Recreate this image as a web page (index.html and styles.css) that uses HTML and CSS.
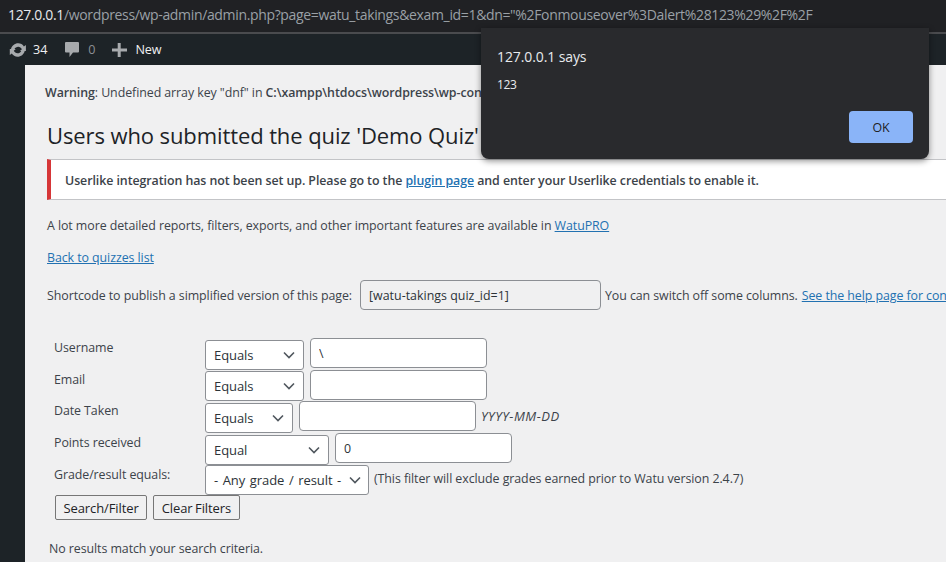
FILE: index.html
```html
<!DOCTYPE html>
<html lang="en">
<head>
<meta charset="utf-8">
<title>Users who submitted the quiz</title>
<link rel="stylesheet" href="styles.css">
</head>
<body>
<header class="urlbar"><span class="host">127.0.0.1</span><span class="path">/wordpress/wp-admin/admin.php?page=watu_takings&amp;exam_id=1&amp;dn="%2Fonmouseover%3Dalert%28123%29%2F%2F</span></header>
<nav class="adminbar">
  <span class="ab-item">
    <svg class="ab-icon" width="20" height="20" viewBox="0 0 20 20"><path d="M10.2 3.300c2.400 0 4.500 1.200 5.700 3.100l2-1.400v6h-6l2-1.700c-.8-1.500-2-2.500-3.700-2.500-1.600 0-3 .9-3.700 2.300H3c.8-3.400 3.700-5.800 7.200-5.800z M1.800 9h6l-2 1.700c.8 1.500 2 2.500 3.700 2.500 1.600 0 3-.9 3.700-2.300h3.500c-.8 3.400-3.700 5.800-7.200 5.800-2.400 0-4.500-1.200-5.700-3.100l-2 1.400z"/></svg>
    <span class="ab-count">34</span>
  </span>
  <span class="ab-item ab-comments">
    <svg class="ab-icon" width="16" height="17" viewBox="0 0 16 17"><path d="M2 1h12a1 1 0 0 1 1 1v8.500a1 1 0 0 1-1 1H9l-3.500 4.500v-4.500H2a1 1 0 0 1-1-1V2a1 1 0 0 1 1-1z"/></svg>
    <span class="ab-zero">0</span>
  </span>
  <span class="ab-item ab-new">
    <svg class="ab-icon" width="15" height="14" viewBox="0 0 15 14"><path d="M5.700 0h3v5.500H15v3H8.700V14h-3V8.500H0v-3h5.700z"/></svg>
    <span class="ab-count">New</span>
  </span>
</nav>
<div class="shell">
  <aside class="sidebar"></aside>
  <main class="content">
    <p class="warning"><b>Warning</b>: Undefined array key "dnf" in <b>C:\xampp\htdocs\wordpress\wp-content\plugins\watu\views\takings.html.php</b></p>
    <h1 class="title">Users who submitted the quiz 'Demo Quiz'</h1>
    <div class="notice"><b>Userlike integration has not been set up. Please go to the <a href="#">plugin page</a> and enter your Userlike credentials to enable it.</b></div>
    <p class="promo">A lot more detailed reports, filters, exports, and other important features are available in <a href="#">WatuPRO</a></p>
    <p class="back"><a href="#">Back to quizzes list</a></p>
    <div class="shortcode">Shortcode to publish a simplified version of this page: <input class="code" type="text" value="[watu-takings quiz_id=1]" readonly> You can switch off some columns. <a href="#">See the help page for configuration</a></div>
    <form class="filters">
      <div class="row"><label class="lbl">Username</label>
        <span class="sel w-99">Equals<svg class="chev" width="12" height="8" viewBox="0 0 12 8"><path d="M1 1.500l5 5 5-5"/></svg></span>
        <input class="txt" type="text" value="\"></div>
      <div class="row"><label class="lbl">Email</label>
        <span class="sel w-99">Equals<svg class="chev" width="12" height="8" viewBox="0 0 12 8"><path d="M1 1.500l5 5 5-5"/></svg></span>
        <input class="txt" type="text"></div>
      <div class="row"><label class="lbl">Date Taken</label>
        <span class="sel w-88">Equals<svg class="chev" width="12" height="8" viewBox="0 0 12 8"><path d="M1 1.500l5 5 5-5"/></svg></span>
        <input class="txt" type="text"> <i class="hint">YYYY-MM-DD</i></div>
      <div class="row"><label class="lbl">Points received</label>
        <span class="sel w-124">Equal<svg class="chev" width="12" height="8" viewBox="0 0 12 8"><path d="M1 1.500l5 5 5-5"/></svg></span>
        <input class="txt" type="text" value="0"></div>
      <div class="row row-grade"><label class="lbl">Grade/result equals:</label>
        <span class="sel w-164">- Any grade / result -<svg class="chev" width="12" height="8" viewBox="0 0 12 8"><path d="M1 1.500l5 5 5-5"/></svg></span>
        <span class="note">(This filter will exclude grades earned prior to Watu version 2.4.7)</span></div>
      <div class="actions"><button class="btn" type="button">Search/Filter</button><button class="btn" type="button">Clear Filters</button></div>
    </form>
    <p class="empty">No results match your search criteria.</p>
  </main>
</div>
<div class="dialog" role="alertdialog">
  <div class="d-title">127.0.0.1 says</div>
  <div class="d-msg">123</div>
  <div class="d-actions"><button class="d-ok" type="button">OK</button></div>
</div>
</body>
</html>
```
FILE: styles.css
```css
* { box-sizing: border-box; }
html, body { margin: 0; height: 562px; overflow: hidden; }
body { width: 946px; background: #1d2327; font-family: "Open Sans", "Noto Sans", sans-serif; font-size: 12.4px; letter-spacing: -0.07px; color: #3c434a; position: relative; }
.urlbar { height: 32px; background: #202124; padding: 0 0 0 8px; font-size: 14px; line-height: 29px; white-space: nowrap; letter-spacing: -0.343px; }
.host { color: #e8eaed; }
.path { color: #9aa0a6; }
.adminbar { height: 33px; padding: 0 0 0 8px; background: #1d2327; border-top: 2px solid #4a4b4e; display: flex; align-items: center; color: #f0f0f1; font-size: 12.6px; }
.ab-item { display: flex; align-items: center; }
.ab-icon { fill: #a7aaad; display: block; }
.ab-count { color: #f0f0f1; margin-left: 5px; }
.ab-comments { margin-left: 17px; }
.ab-zero { color: #8c8f94; margin-left: 8px; }
.ab-new { margin-left: 17px; }
.ab-new .ab-count { margin-left: 8px; }
.shell { display: flex; height: 497px; }
.sidebar { width: 25px; flex: none; background: #1d2327; }
.content { flex: none; width: 921px; background: #f0f0f1; padding: 0 0 0 22px; overflow: hidden; white-space: nowrap; }
.content p { margin: 0; }
.content .warning { padding-top: 19px; line-height: 18px; margin-left: -2px; }
.warning b { font-weight: 600; }
.title { font-size: 22px; font-weight: 400; color: #1d2327; margin: 19px 0 0; line-height: 29px; letter-spacing: -0.1px; }
.notice { margin: 9px 0 0; width: 900px; height: 41px; background: #fff; border: 1px solid #c3c4c7; border-left: 4px solid #d63638; padding: 1px 0 0 14px; line-height: 40px; }
.notice b { font-weight: 600; }
a { color: #2271b1; text-decoration: underline; }
.content .promo { margin-top: 17px; line-height: 18px; }
.content .back { margin-top: 14px; line-height: 18px; }
.shortcode { margin-top: 13px; display: flex; align-items: center; gap: 4px; height: 30px; }
.code { width: 241px; flex: none; height: 30px; margin-left: 4px; padding: 0 8px; border: 1px solid #8c8f94; border-radius: 4px; background: #f0f0f1; color: #2c3338; font: inherit; letter-spacing: 0.02px; }
.filters { padding: 28px 0 0 7px; }
.row { display: flex; align-items: flex-start; height: 31.7px; }
.lbl { width: 151px; flex: none; line-height: 18px; margin-top: 1px; }
.sel { display: flex; align-items: center; justify-content: space-between; height: 30px; margin-top: 1.6px; padding: 0 8px; background: #fff; border: 1px solid #8c8f94; border-radius: 3px; color: #2c3338; flex: none; font-size: 13px; word-spacing: 1.3px; }
.w-99 { width: 99px; }
.w-88 { width: 88px; }
.w-124 { width: 124px; }
.w-164 { width: 164px; padding-right: 7px; }
.chev { fill: none; stroke: #50575e; stroke-width: 1.6; display: block; flex: none; }
.txt { width: 177px; height: 30px; margin-left: 6px; padding: 0 8px; background: #fff; border: 1px solid #8c8f94; border-radius: 4px; color: #2c3338; font: inherit; flex: none; }
.hint { margin-left: 5px; line-height: 30px; font-size: 13px; letter-spacing: 0.5px; }
.note { margin-left: 5px; line-height: 26px; }
.row-grade { height: 28.2px; }
.row-grade .lbl { margin-top: 1px; }
.row-grade .sel { margin-top: 0.5px; }
.row-grade .note { margin-top: 1px; }
.actions { display: flex; gap: 6px; padding-left: 1px; margin-top: 2px; }
.btn { height: 25px; padding: 1px 7.5px 0; background: #f0f0f1; border: 1px solid #767676; border-radius: 2px; color: #1d2327; font: inherit; font-size: 13px; letter-spacing: -0.1px; word-spacing: -0.7px; }
.content .empty { margin: 20px 0 0 2px; line-height: 18px; }
.dialog { position: absolute; left: 481px; top: 28px; width: 448px; height: 131px; background: #292a2d; border-radius: 0 0 8px 8px; box-shadow: 0 2px 6px rgba(0,0,0,.45); padding: 19px 16px 0; color: #e8eaed; }
.d-title { font-size: 14px; line-height: 20px; letter-spacing: -0.1px; }
.d-msg { font-size: 12px; line-height: 16px; margin-top: 10px; letter-spacing: -0.3px; }
.d-actions { display: flex; justify-content: flex-end; margin-top: 18px; }
.d-ok { width: 64px; height: 32px; background: #8ab4f8; border: 0; border-radius: 4px; color: #202124; font: inherit; font-size: 12.4px; }
```
